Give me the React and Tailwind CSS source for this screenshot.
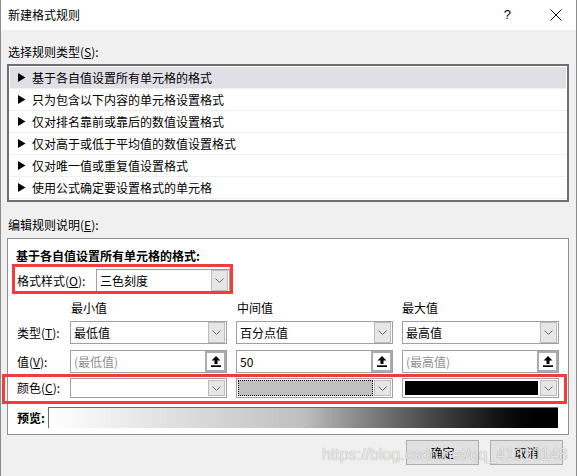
import React from "react";

function Chevron() {
  return (
    <svg width="9" height="5" viewBox="0 0 9 5">
      <path d="M0.5 0.5 L4.5 4.5 L8.5 0.5" stroke="#6b6b6b" fill="none" strokeWidth="1" />
    </svg>
  );
}

function DropBtn({ h = "h-[21px]" }) {
  return (
    <div className={`flex ${h} w-[17px] shrink-0 items-center justify-center border border-[#bcbcbc] bg-[#e6e6e6]`}>
      <Chevron />
    </div>
  );
}

function Select({ text, className = "" }) {
  return (
    <div className={`flex h-[23px] items-center border border-[#a0a0a0] bg-white pl-[3px] pr-[1px] ${className}`}>
      <span className="flex-1 whitespace-nowrap leading-[16px]">{text}</span>
      <DropBtn />
    </div>
  );
}

function UpIcon() {
  return (
    <svg width="10" height="11" viewBox="0 0 10 11">
      <path d="M5 0 L9.5 4.5 H6.5 V8 H3.5 V4.5 H0.5 Z" fill="#000" />
      <rect x="0" y="9.3" width="10" height="1.7" fill="#000" />
    </svg>
  );
}

function ValueInput({ text, gray }) {
  return (
    <div className="flex h-[23px] border border-[#a0a0a0] bg-white">
      <span className={`flex flex-1 items-center whitespace-nowrap pl-[3px] leading-[16px] ${gray ? "text-[#8f8f8f]" : "text-black"}`}>
        {text}
      </span>
      <div className="flex w-[21px] shrink-0 bg-[#ababab] p-[2px]">
        <div className="flex flex-1 items-center justify-center bg-white">
          <UpIcon />
        </div>
      </div>
    </div>
  );
}

function ColorSelect({ kind }) {
  let swatch;
  if (kind === "white") swatch = <div className="flex-1 bg-white" />;
  else if (kind === "gray")
    swatch = <div className="mr-[1px] flex-1 border border-dotted border-black bg-[#c0c0c0]" />;
  else swatch = <div className="my-[1px] mr-[2px] ml-[1px] flex-1 bg-black" />;
  return (
    <div className="flex h-[20px] items-center border border-[#a0a0a0] bg-white p-[1px] pr-[1px]">
      <div className="flex h-full flex-1">{swatch}</div>
      <DropBtn h="h-[16px]" />
    </div>
  );
}

const items = [
  "基于各自值设置所有单元格的格式",
  "只为包含以下内容的单元格设置格式",
  "仅对排名靠前或靠后的数值设置格式",
  "仅对高于或低于平均值的数值设置格式",
  "仅对唯一值或重复值设置格式",
  "使用公式确定要设置格式的单元格",
];

export default function App() {
  return (
    <div className="relative h-[476px] w-[577px] overflow-hidden border-x border-[#8c8c8c] bg-[#f0f0f0] font-['Noto_Sans_CJK_SC','Noto_Sans',sans-serif] text-[12px] leading-[16px] text-black">
      {/* Title bar */}
      <div className="flex h-[30px] items-center bg-white pl-[7px] pr-[14px]">
        <span className="leading-[16px]">新建格式规则</span>
        <span className="ml-auto font-['Liberation_Sans',sans-serif] text-[13px] leading-[16px]">?</span>
        <svg className="ml-[39px]" width="12" height="12" viewBox="0 0 12 12">
          <path d="M0.5 0.5 L11.5 11.5 M11.5 0.5 L0.5 11.5" stroke="#111" strokeWidth="1" />
        </svg>
      </div>

      <div className="flex flex-col pl-[6px] pr-[7px]">
        <div className="mt-[14px] pl-[1px]">
          选择规则类型(<span className="underline">S</span>):
        </div>

        {/* Rule list */}
        <div className="mt-[4px] border-2 border-[#6f6f6f] bg-white p-[1px]">
          {items.map((t, i) => (
            <div
              key={t}
              className={`flex h-[22px] items-center border-b border-[#efefef] pl-[8px] ${i === 0 ? "bg-[#e0dfe5]" : ""}`}
            >
              <svg width="8" height="9" viewBox="0 0 8 9" className="shrink-0">
                <path d="M0 0 L7.5 4.5 L0 9 Z" fill="#000" />
              </svg>
              <span className="ml-[6px] leading-[16px]">{t}</span>
            </div>
          ))}
        </div>

        <div className="mt-[15px] pl-[1px]">
          编辑规则说明(<span className="underline">E</span>):
        </div>

        {/* Description box */}
        <div className="mt-[5px] flex flex-col border border-[#8f8f8f] bg-white pt-[9px] pr-[9px] pb-[6px] pl-[8px]">
          <div className="font-bold">基于各自值设置所有单元格的格式:</div>

          <div className="mt-[5px] flex items-center">
            <span className="w-[80px] pl-[1px]">
              格式样式(<span className="underline">O</span>):
            </span>
            <Select text="三色刻度" className="w-[134px]" />
          </div>

          <div className="mt-[8px] grid grid-cols-[45px_157px_157px_157px] gap-x-[9px]">
            <div />
            <div className="pl-[1px]">最小值</div>
            <div className="pl-[1px]">中间值</div>
            <div>最大值</div>
          </div>

          <div className="mt-[5px] grid grid-cols-[45px_157px_157px_157px] items-center gap-x-[9px]">
            <div className="whitespace-nowrap pl-[1px]">
              类型(<span className="underline">T</span>):
            </div>
            <Select text="最低值" />
            <Select text="百分点值" />
            <Select text="最高值" />
          </div>

          <div className="mt-[6px] grid grid-cols-[45px_157px_157px_157px] items-center gap-x-[9px]">
            <div className="whitespace-nowrap pl-[1px]">
              值(<span className="underline">V</span>):
            </div>
            <ValueInput text="(最低值)" gray />
            <ValueInput text="50" />
            <ValueInput text="(最高值)" gray />
          </div>

          <div className="mt-[5px] grid grid-cols-[45px_157px_157px_157px] items-center gap-x-[9px]">
            <div className="whitespace-nowrap pl-[1px]">
              颜色(<span className="underline">C</span>):
            </div>
            <ColorSelect kind="white" />
            <ColorSelect kind="gray" />
            <ColorSelect kind="black" />
          </div>

          <div className="mt-[9px] flex items-center">
            <span className="w-[32px] pl-[1px] font-bold">预览:</span>
            <div className="h-[21px] w-[510px] border-t border-l border-[#6d6d6d] border-r-white border-b-[#e6e6e6] bg-gradient-to-r from-white via-[#bfbfbf] to-black" />
          </div>
        </div>

        {/* Buttons */}
        <div className="mt-[5px] flex justify-end gap-[11px] pr-[6px]">
          <button className="flex h-[25px] w-[73px] items-center justify-center border border-[#adadad] bg-[#e1e1e1] leading-[16px]">
            确定
          </button>
          <button className="flex h-[25px] w-[73px] items-center justify-center border border-[#adadad] bg-[#e1e1e1] leading-[16px]">
            取消
          </button>
        </div>
      </div>

      {/* Red annotation rectangles */}
      <div className="pointer-events-none absolute top-[264px] left-[11px] h-[30px] w-[221px] border-[3px] border-[#f43b3b]" />
      <div className="pointer-events-none absolute top-[374px] left-[1px] h-[30px] w-[565px] border-[3px] border-[#f43b3b]" />

      {/* Watermark */}
      <div className="pointer-events-none absolute top-[446px] left-[321px] whitespace-nowrap font-['Liberation_Sans',sans-serif] text-[16px] leading-[18px] text-white/80 [text-shadow:0_0_1px_rgba(0,0,0,0.45)]">
        https://blog.csdn.net/qq_41310148
      </div>
    </div>
  );
}
